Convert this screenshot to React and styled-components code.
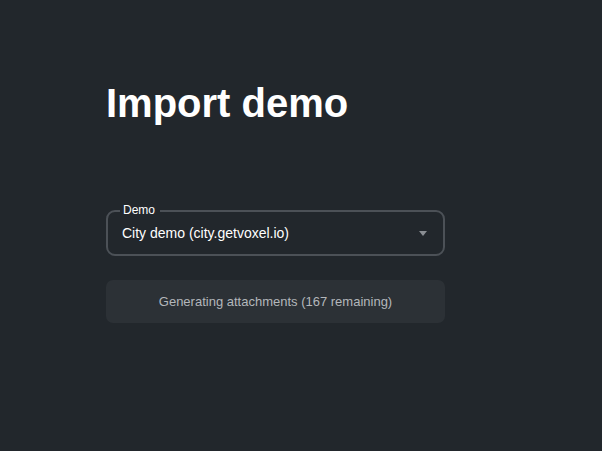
import React from "react";
import styled, { createGlobalStyle } from "styled-components";

const GlobalStyle = createGlobalStyle`
  html, body {
    margin: 0;
    padding: 0;
    background: #22272c;
    font-family: "Liberation Sans", Arial, sans-serif;
  }
`;

const Page = styled.div`
  min-height: 451px;
  padding: 78px 0 0 106px;
  box-sizing: border-box;
`;

const Column = styled.div`
  width: 339px;
  display: flex;
  flex-direction: column;
`;

const Title = styled.h1`
  margin: 0;
  font-size: 40px;
  line-height: 50px;
  font-weight: 700;
  color: #ffffff;
`;

const Field = styled.div`
  position: relative;
  margin-top: 82px;
  padding: 0 16px 0 14px;
  height: 46px;
  box-sizing: border-box;
  border: 2px solid #4c5157;
  border-radius: 9px;
  display: flex;
  align-items: center;
  justify-content: space-between;
  cursor: pointer;
`;

// floating label sitting over the top border
const Legend = styled.span`
  position: absolute;
  top: -9px;
  left: 12px;
  padding: 0 5px 0 3px;
  background: #22272c;
  font-size: 12px;
  line-height: 14px;
  color: #ffffff;
`;

const Value = styled.span`
  font-size: 14px;
  color: #ffffff;
`;

const Caret = styled.span`
  width: 0;
  height: 0;
  border-left: 4.5px solid transparent;
  border-right: 4.5px solid transparent;
  border-top: 5px solid #8a8e93;
`;

const Status = styled.div`
  margin-top: 24px;
  height: 43px;
  border-radius: 7px;
  background: #2c3136;
  display: flex;
  align-items: center;
  justify-content: center;
  font-size: 13px;
  color: #b3b7bb;
`;

export default function App() {
  return (
    <>
      <GlobalStyle />
      <Page>
        <Column>
          <Title>Import demo</Title>
          <Field>
            <Legend>Demo</Legend>
            <Value>City demo (city.getvoxel.io)</Value>
            <Caret />
          </Field>
          <Status>Generating attachments (167 remaining)</Status>
        </Column>
      </Page>
    </>
  );
}
